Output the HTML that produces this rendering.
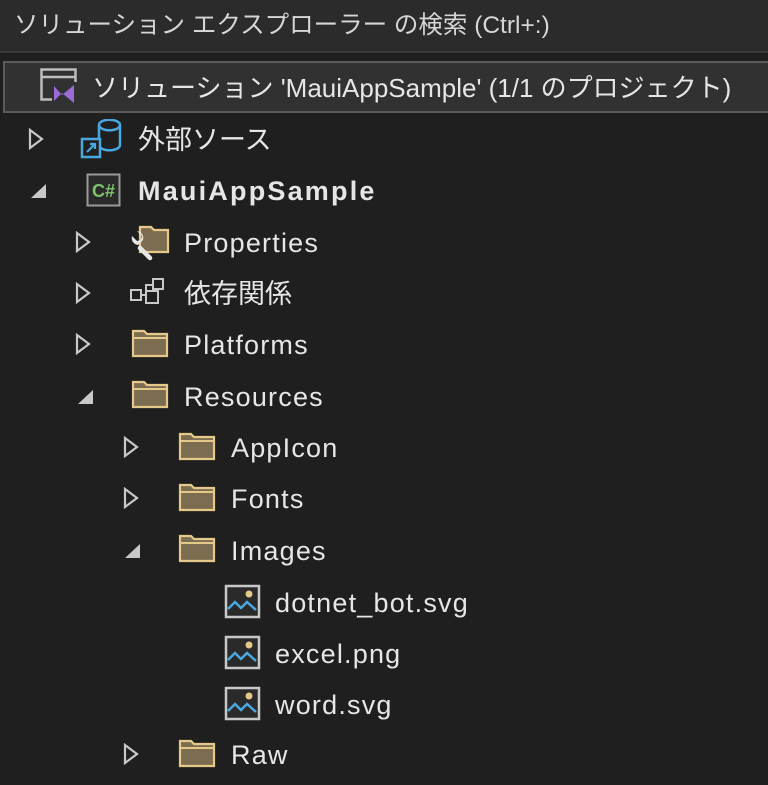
<!DOCTYPE html>
<html><head><meta charset="utf-8"><style>
*{margin:0;padding:0;box-sizing:border-box}
body{width:768px;height:785px;background:#1f1f1f;overflow:hidden;position:relative;font-family:"Liberation Sans","Noto Sans CJK JP",sans-serif;color:#e6e6e6}
.search{position:absolute;left:0;top:0;width:768px;height:53px;background:#2b2b2b;border-bottom:2px solid #3a3a3a;font-size:24.5px;line-height:52px;padding-left:14px;color:#d6d6d6}
.sol{position:absolute;left:3px;top:61px;width:770px;height:52px;background:#313131;border:2px solid #5a5a5a}
.t{position:absolute;font-size:27px;line-height:30px;white-space:nowrap;letter-spacing:1.2px}
.j{letter-spacing:0}
svg{position:absolute}
</style></head><body>
<div class="search">ソリューション エクスプローラー の検索 (Ctrl+:)</div>
<div class="sol"></div>
<svg style="left:40px;top:68px" width="40" height="38" viewBox="0 0 40 38"><rect x="1.5" y="1.5" width="34" height="30" fill="none" stroke="#bdbdbd" stroke-width="2.5"/><line x1="1.5" y1="9" x2="35.5" y2="9" stroke="#bdbdbd" stroke-width="2.5"/><rect x="12" y="14" width="26" height="22" fill="#313131"/><path d="M14 18 L22 27 L34 17 L34 35 L22 25 L14 33 Z" fill="#9b6ad6"/></svg>
<div class="t j" style="left:92px;top:73px;font-size:26px">ソリューション 'MauiAppSample' (1/1 のプロジェクト)</div>

<svg style="left:28px;top:128px" width="16" height="22"><path d="M2 2 L14 11 L2 20 Z" fill="none" stroke="#c8c8c8" stroke-width="2.2"/></svg>
<svg style="left:80px;top:119px" width="44" height="42"><path d="M98 0" /><path d="M19 6 a8 4 0 0 1 21 0 v20 a8 4 0 0 1 -21 0 Z" fill="none" stroke="#4aa8e0" stroke-width="2.5"/><path d="M19 6 a8 4 0 0 0 21 0" fill="none" stroke="#4aa8e0" stroke-width="2.5"/><rect x="2" y="20" width="18" height="18" fill="#1f1f1f" stroke="#4aa8e0" stroke-width="2.5"/><path d="M7 33 L15 25 M10 25 H15 V30" stroke="#4aa8e0" stroke-width="2.2" fill="none"/></svg>
<div class="t j" style="left:138px;top:125px">外部ソース</div>

<svg style="left:28px;top:182px" width="20" height="18"><path d="M18 2 L18 16 L3 16 Z" fill="#c8c8c8"/></svg>
<svg style="left:86px;top:173px" width="36" height="34"><rect x="1.5" y="1.5" width="32" height="31" fill="#2a2a2a" stroke="#9a9a9a" stroke-width="2"/><text x="6" y="24" font-family="Liberation Sans" font-size="18" font-weight="bold" fill="#7ec36b">C#</text></svg>
<div class="t" style="left:138px;top:176px;font-weight:bold;letter-spacing:2.2px">MauiAppSample</div>

<svg style="left:75px;top:231px" width="16" height="22"><path d="M2 2 L14 11 L2 20 Z" fill="none" stroke="#c8c8c8" stroke-width="2.2"/></svg>
<svg style="left:128px;top:224px" width="46" height="40"><path d="M12 3 h11 l3 3 h14 v22 h-28 Z" fill="#7c6c50" stroke="#e5c98a" stroke-width="2.2"/><path d="M12 24 L22 34" stroke="#e6e6e6" stroke-width="4.5" stroke-linecap="round"/><path d="M4 12 l5 5 4 -1 1 -4 -5 -5 a7 7 0 0 1 6 9 l-5 5 a7 7 0 0 1 -6 -9 Z" fill="#e6e6e6"/></svg>
<div class="t" style="left:184px;top:228px">Properties</div>

<svg style="left:75px;top:282px" width="16" height="22"><path d="M2 2 L14 11 L2 20 Z" fill="none" stroke="#c8c8c8" stroke-width="2.2"/></svg>
<svg style="left:129px;top:277px" width="40" height="30"><rect x="2" y="13" width="10" height="10" fill="none" stroke="#c8c8c8" stroke-width="2"/><rect x="17" y="8" width="12" height="12" fill="none" stroke="#c8c8c8" stroke-width="2"/><rect x="24" y="2" width="10" height="10" fill="#1f1f1f" stroke="#c8c8c8" stroke-width="2"/><rect x="17" y="14" width="12" height="12" fill="#1f1f1f" stroke="#c8c8c8" stroke-width="2"/><path d="M12 18 H17" stroke="#c8c8c8" stroke-width="2"/></svg>
<div class="t j" style="left:184px;top:279px">依存関係</div>

<svg style="left:75px;top:333px" width="16" height="22"><path d="M2 2 L14 11 L2 20 Z" fill="none" stroke="#c8c8c8" stroke-width="2.2"/></svg>
<svg style="left:131px;top:327px" width="40" height="34"><path d="M2 4 h11 l3 3 h20 v22 h-34 Z" fill="#7c6c50" stroke="#e5c98a" stroke-width="2.2"/><path d="M2 11 h34" stroke="#e5c98a" stroke-width="2"/></svg>
<div class="t" style="left:184px;top:330px">Platforms</div>

<svg style="left:75px;top:388px" width="20" height="18"><path d="M18 2 L18 16 L3 16 Z" fill="#c8c8c8"/></svg>
<svg style="left:131px;top:378px" width="40" height="34"><path d="M2 4 h11 l3 3 h20 v22 h-34 Z" fill="#7c6c50" stroke="#e5c98a" stroke-width="2.2"/><path d="M2 11 h34" stroke="#e5c98a" stroke-width="2"/></svg>
<div class="t" style="left:184px;top:382px">Resources</div>

<svg style="left:123px;top:436px" width="16" height="22"><path d="M2 2 L14 11 L2 20 Z" fill="none" stroke="#c8c8c8" stroke-width="2.2"/></svg>
<svg style="left:178px;top:430px" width="40" height="34"><path d="M2 4 h11 l3 3 h20 v22 h-34 Z" fill="#7c6c50" stroke="#e5c98a" stroke-width="2.2"/><path d="M2 11 h34" stroke="#e5c98a" stroke-width="2"/></svg>
<div class="t" style="left:231px;top:433px">AppIcon</div>

<svg style="left:123px;top:487px" width="16" height="22"><path d="M2 2 L14 11 L2 20 Z" fill="none" stroke="#c8c8c8" stroke-width="2.2"/></svg>
<svg style="left:178px;top:481px" width="40" height="34"><path d="M2 4 h11 l3 3 h20 v22 h-34 Z" fill="#7c6c50" stroke="#e5c98a" stroke-width="2.2"/><path d="M2 11 h34" stroke="#e5c98a" stroke-width="2"/></svg>
<div class="t" style="left:231px;top:484px">Fonts</div>

<svg style="left:122px;top:542px" width="20" height="18"><path d="M18 2 L18 16 L3 16 Z" fill="#c8c8c8"/></svg>
<svg style="left:178px;top:532px" width="40" height="34"><path d="M2 4 h11 l3 3 h20 v22 h-34 Z" fill="#7c6c50" stroke="#e5c98a" stroke-width="2.2"/><path d="M2 11 h34" stroke="#e5c98a" stroke-width="2"/></svg>
<div class="t" style="left:231px;top:536px">Images</div>

<svg style="left:224px;top:584px" width="38" height="36"><rect x="2" y="2" width="33" height="31" fill="#2a2a2a" stroke="#c8c8c8" stroke-width="2.5"/><circle cx="25" cy="10" r="3.5" fill="#e5c98a"/><path d="M4 25 L11 18 L17 24 L23 18 L32 26" stroke="#4aa8e0" stroke-width="2.5" fill="none"/></svg>
<div class="t" style="left:275px;top:588px">dotnet_bot.svg</div>
<svg style="left:224px;top:635px" width="38" height="36"><rect x="2" y="2" width="33" height="31" fill="#2a2a2a" stroke="#c8c8c8" stroke-width="2.5"/><circle cx="25" cy="10" r="3.5" fill="#e5c98a"/><path d="M4 25 L11 18 L17 24 L23 18 L32 26" stroke="#4aa8e0" stroke-width="2.5" fill="none"/></svg>
<div class="t" style="left:275px;top:639px">excel.png</div>
<svg style="left:224px;top:686px" width="38" height="36"><rect x="2" y="2" width="33" height="31" fill="#2a2a2a" stroke="#c8c8c8" stroke-width="2.5"/><circle cx="25" cy="10" r="3.5" fill="#e5c98a"/><path d="M4 25 L11 18 L17 24 L23 18 L32 26" stroke="#4aa8e0" stroke-width="2.5" fill="none"/></svg>
<div class="t" style="left:275px;top:690px">word.svg</div>

<svg style="left:123px;top:743px" width="16" height="22"><path d="M2 2 L14 11 L2 20 Z" fill="none" stroke="#c8c8c8" stroke-width="2.2"/></svg>
<svg style="left:178px;top:737px" width="40" height="34"><path d="M2 4 h11 l3 3 h20 v22 h-34 Z" fill="#7c6c50" stroke="#e5c98a" stroke-width="2.2"/><path d="M2 11 h34" stroke="#e5c98a" stroke-width="2"/></svg>
<div class="t" style="left:231px;top:740px">Raw</div>
</body></html>
